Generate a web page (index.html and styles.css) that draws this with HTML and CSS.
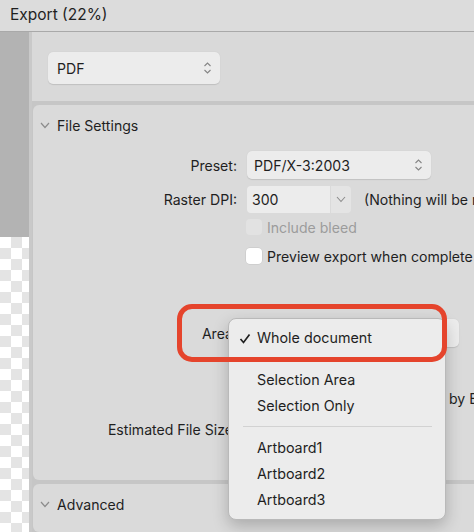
FILE: index.html
```html
<!DOCTYPE html>
<html>
<head>
<title>Export (22%)</title>
<link rel="stylesheet" href="styles.css">
</head>
<body>

<div class="window">
	<div class="titlebar">Export (22%)</div>

	<div class="main">
		<div class="strip">
			<div class="strip-top"></div>
			<div class="checker"></div>
		</div><!-- end strip -->

		<div class="content">
			<div class="format">
				<div class="select format-select">
					<span>PDF</span>
					<svg class="updown" width="9" height="14" viewBox="0 0 9 14"><polyline points="1.5,5 4.5,2 7.5,5"/><polyline points="1.5,9 4.5,12 7.5,9"/></svg>
				</div>
			</div><!-- end format -->

			<div class="panel settings">
				<div class="head">
					<svg class="disclose" width="10" height="7" viewBox="0 0 10 7"><polyline points="1,1 5,5.5 9,1"/></svg>
					File Settings
				</div>

				<div class="form">
					<div class="row r-preset">
						<label>Preset:</label>
						<div class="select preset-select">
							<span>PDF/X-3:2003</span>
							<svg class="updown" width="9" height="14" viewBox="0 0 9 14"><polyline points="1.5,5 4.5,2 7.5,5"/><polyline points="1.5,9 4.5,12 7.5,9"/></svg>
						</div>
					</div>

					<div class="row r-dpi">
						<label>Raster DPI:</label>
						<div class="combo">
							<div class="combo-field">300</div>
							<div class="combo-btn">
								<svg width="10" height="7" viewBox="0 0 10 7"><polyline points="1,1 5,5.5 9,1"/></svg>
							</div>
						</div>
						<span class="note">(Nothing will be rasterized)</span>
					</div>

					<div class="row r-bleed">
						<label></label>
						<div class="check disabled"><span class="box"></span>Include bleed</div>
					</div>

					<div class="row r-preview">
						<label></label>
						<div class="check"><span class="box"></span>Preview export when complete</div>
					</div>

					<div class="row r-area">
						<label>Area:</label>
						<div class="select area-select"></div>
					</div>

					<div class="row r-raster">
						<label></label>
						<div class="select raster-select"></div>
						<span class="note">by Export</span>
					</div>

					<div class="row r-size">
						<label>Estimated File Size:</label>
						<span class="value"></span>
					</div>
				</div><!-- end form -->
			</div><!-- end settings -->

			<div class="panel advanced">
				<div class="head">
					<svg class="disclose" width="10" height="7" viewBox="0 0 10 7"><polyline points="1,1 5,5.5 9,1"/></svg>
					Advanced
				</div>
			</div>
		</div><!-- end content -->
	</div><!-- end main -->

	<!-- popup opened from the Area button -->
	<div class="menu">
		<div class="item checked">
			<svg class="tick" width="12" height="11" viewBox="0 0 12 11"><polyline points="1.5,6 4.5,9.5 10.5,1.5"/></svg>
			Whole document
		</div>
		<div class="sep"></div>
		<div class="item">Selection Area</div>
		<div class="item">Selection Only</div>
		<div class="sep"></div>
		<div class="item">Artboard1</div>
		<div class="item">Artboard2</div>
		<div class="item">Artboard3</div>
	</div><!-- end menu -->

	<div class="ring"></div>
</div><!-- end window -->

</body>
</html>
```

FILE: styles.css
```css
body {
margin: 0;
font-family: Inter, "Noto Sans", "Liberation Sans", sans-serif;
font-size: 14.1px;
color: #1f1f1f;
background: #d9d9d9;
overflow: hidden;
}

.window {
position: relative;
width: 474px;
height: 532px;
overflow: hidden;
}

.titlebar {
height: 32px;
line-height: 30px;
padding-left: 10px;
font-size: 15.5px;
background: #dcdcdc;
border-bottom: 1px solid #a9a9a9;
box-sizing: border-box;
}

.main {
display: flex;
height: 500px;
}

/* canvas strip on the left */
.strip {
width: 29px;
flex-shrink: 0;
display: flex;
flex-direction: column;
border-right: 3px solid #c9c9c9;
}
.strip-top {
height: 205px;
background: #b3b3b3;
}
.checker {
flex: 1;
background-color: #fff;
background-image:
  linear-gradient(45deg, #e4e4e4 25%, transparent 25%, transparent 75%, #e4e4e4 75%),
  linear-gradient(45deg, #e4e4e4 25%, transparent 25%, transparent 75%, #e4e4e4 75%);
background-size: 22px 22px;
background-position: 0 0, 11px 11px;
}

.content {
flex: 1;
min-width: 0;
display: flex;
flex-direction: column;
background: #c6c6c6;
gap: 4px;
margin-right: -12px;
}

.format {
height: 69px;
flex-shrink: 0;
background: #d9d9d9;
padding: 20px 0 0 16px;
box-sizing: border-box;
}

.panel {
background: #dadada;
border-radius: 6px;
margin-left: 1px;
}

.head {
display: flex;
align-items: center;
height: 40px;
padding-left: 7px;
gap: 7px;
}
.disclose polyline {
fill: none;
stroke: #8c8c8c;
stroke-width: 1.2;
}

/* pop-up buttons */
.select {
display: flex;
align-items: center;
justify-content: space-between;
box-sizing: border-box;
background: #ececec;
border-radius: 5px;
padding: 0 8px 0 7px;
box-shadow: 0 0.5px 1px rgba(0,0,0,0.12);
}
.updown polyline {
fill: none;
stroke: #858585;
stroke-width: 1.1;
}
.format-select {
width: 172px;
height: 32px;
padding-left: 9px;
}
.preset-select {
width: 184px;
height: 28px;
}
.area-select {
width: 212px;
height: 28px;
}
.raster-select {
width: 194px;
height: 26px;
}

.form {
display: flex;
flex-direction: column;
padding: 6px 0 39px;
}
.row {
display: grid;
grid-template-columns: 204px auto auto;
column-gap: 10px;
align-items: center;
justify-content: start;
}
.row label {
text-align: right;
}
.r-preset { height: 28px; }
.r-dpi { height: 27px; margin-top: 7px; }
.r-bleed { height: 20px; margin-top: 4px; }
.r-preview { height: 20px; margin-top: 9px; }
.r-area { height: 28px; margin-top: 53px; }
.r-raster { height: 26px; margin-top: 38px; }
.r-size { height: 24px; margin-top: 6px; }

.note {
white-space: nowrap;
margin-left: 3px;
}
.r-raster .note {
margin-left: -2px;
}

.combo {
display: flex;
height: 27px;
gap: 1px;
}
.combo-field {
width: 78px;
background: #ececec;
border-radius: 4px 0 0 4px;
padding-left: 5px;
line-height: 27px;
}
.combo-btn {
width: 20px;
background: #e4e4e4;
border-radius: 0 4px 4px 0;
display: flex;
align-items: center;
justify-content: center;
}
.combo-btn polyline {
fill: none;
stroke: #8c8c8c;
stroke-width: 1.1;
}

.check {
display: flex;
align-items: center;
gap: 5px;
margin-left: -1px;
white-space: nowrap;
}
.check .box {
width: 16px;
height: 16px;
border-radius: 4px;
background: #fff;
box-shadow: 0 0 0 0.5px #c4c4c4;
}
.check.disabled {
color: #9c9c9c;
}
.check.disabled .box {
background: #e2e2e2;
box-shadow: none;
}

.advanced {
flex: 1;
}

/* the open pop-up menu */
.menu {
position: absolute;
left: 228px;
top: 318px;
width: 218px;
padding: 6px 0;
box-sizing: border-box;
background: #ececec;
border-radius: 8px;
border: 0.5px solid #b9b9b9;
box-shadow: 0 6px 16px rgba(0,0,0,0.22);
font-size: 14.3px;
}
.item {
height: 26px;
line-height: 26px;
padding-left: 28px;
position: relative;
}
.tick {
position: absolute;
left: 10px;
top: 8px;
}
.tick polyline {
fill: none;
stroke: #1f1f1f;
stroke-width: 1.7;
}
.sep {
height: 1px;
background: #d2d2d2;
margin: 7px 13px 8px 14px;
}

.ring {
position: absolute;
left: 177px;
top: 304px;
width: 270px;
height: 58px;
box-sizing: border-box;
border: 5px solid #e5442c;
border-radius: 15px;
}
```
